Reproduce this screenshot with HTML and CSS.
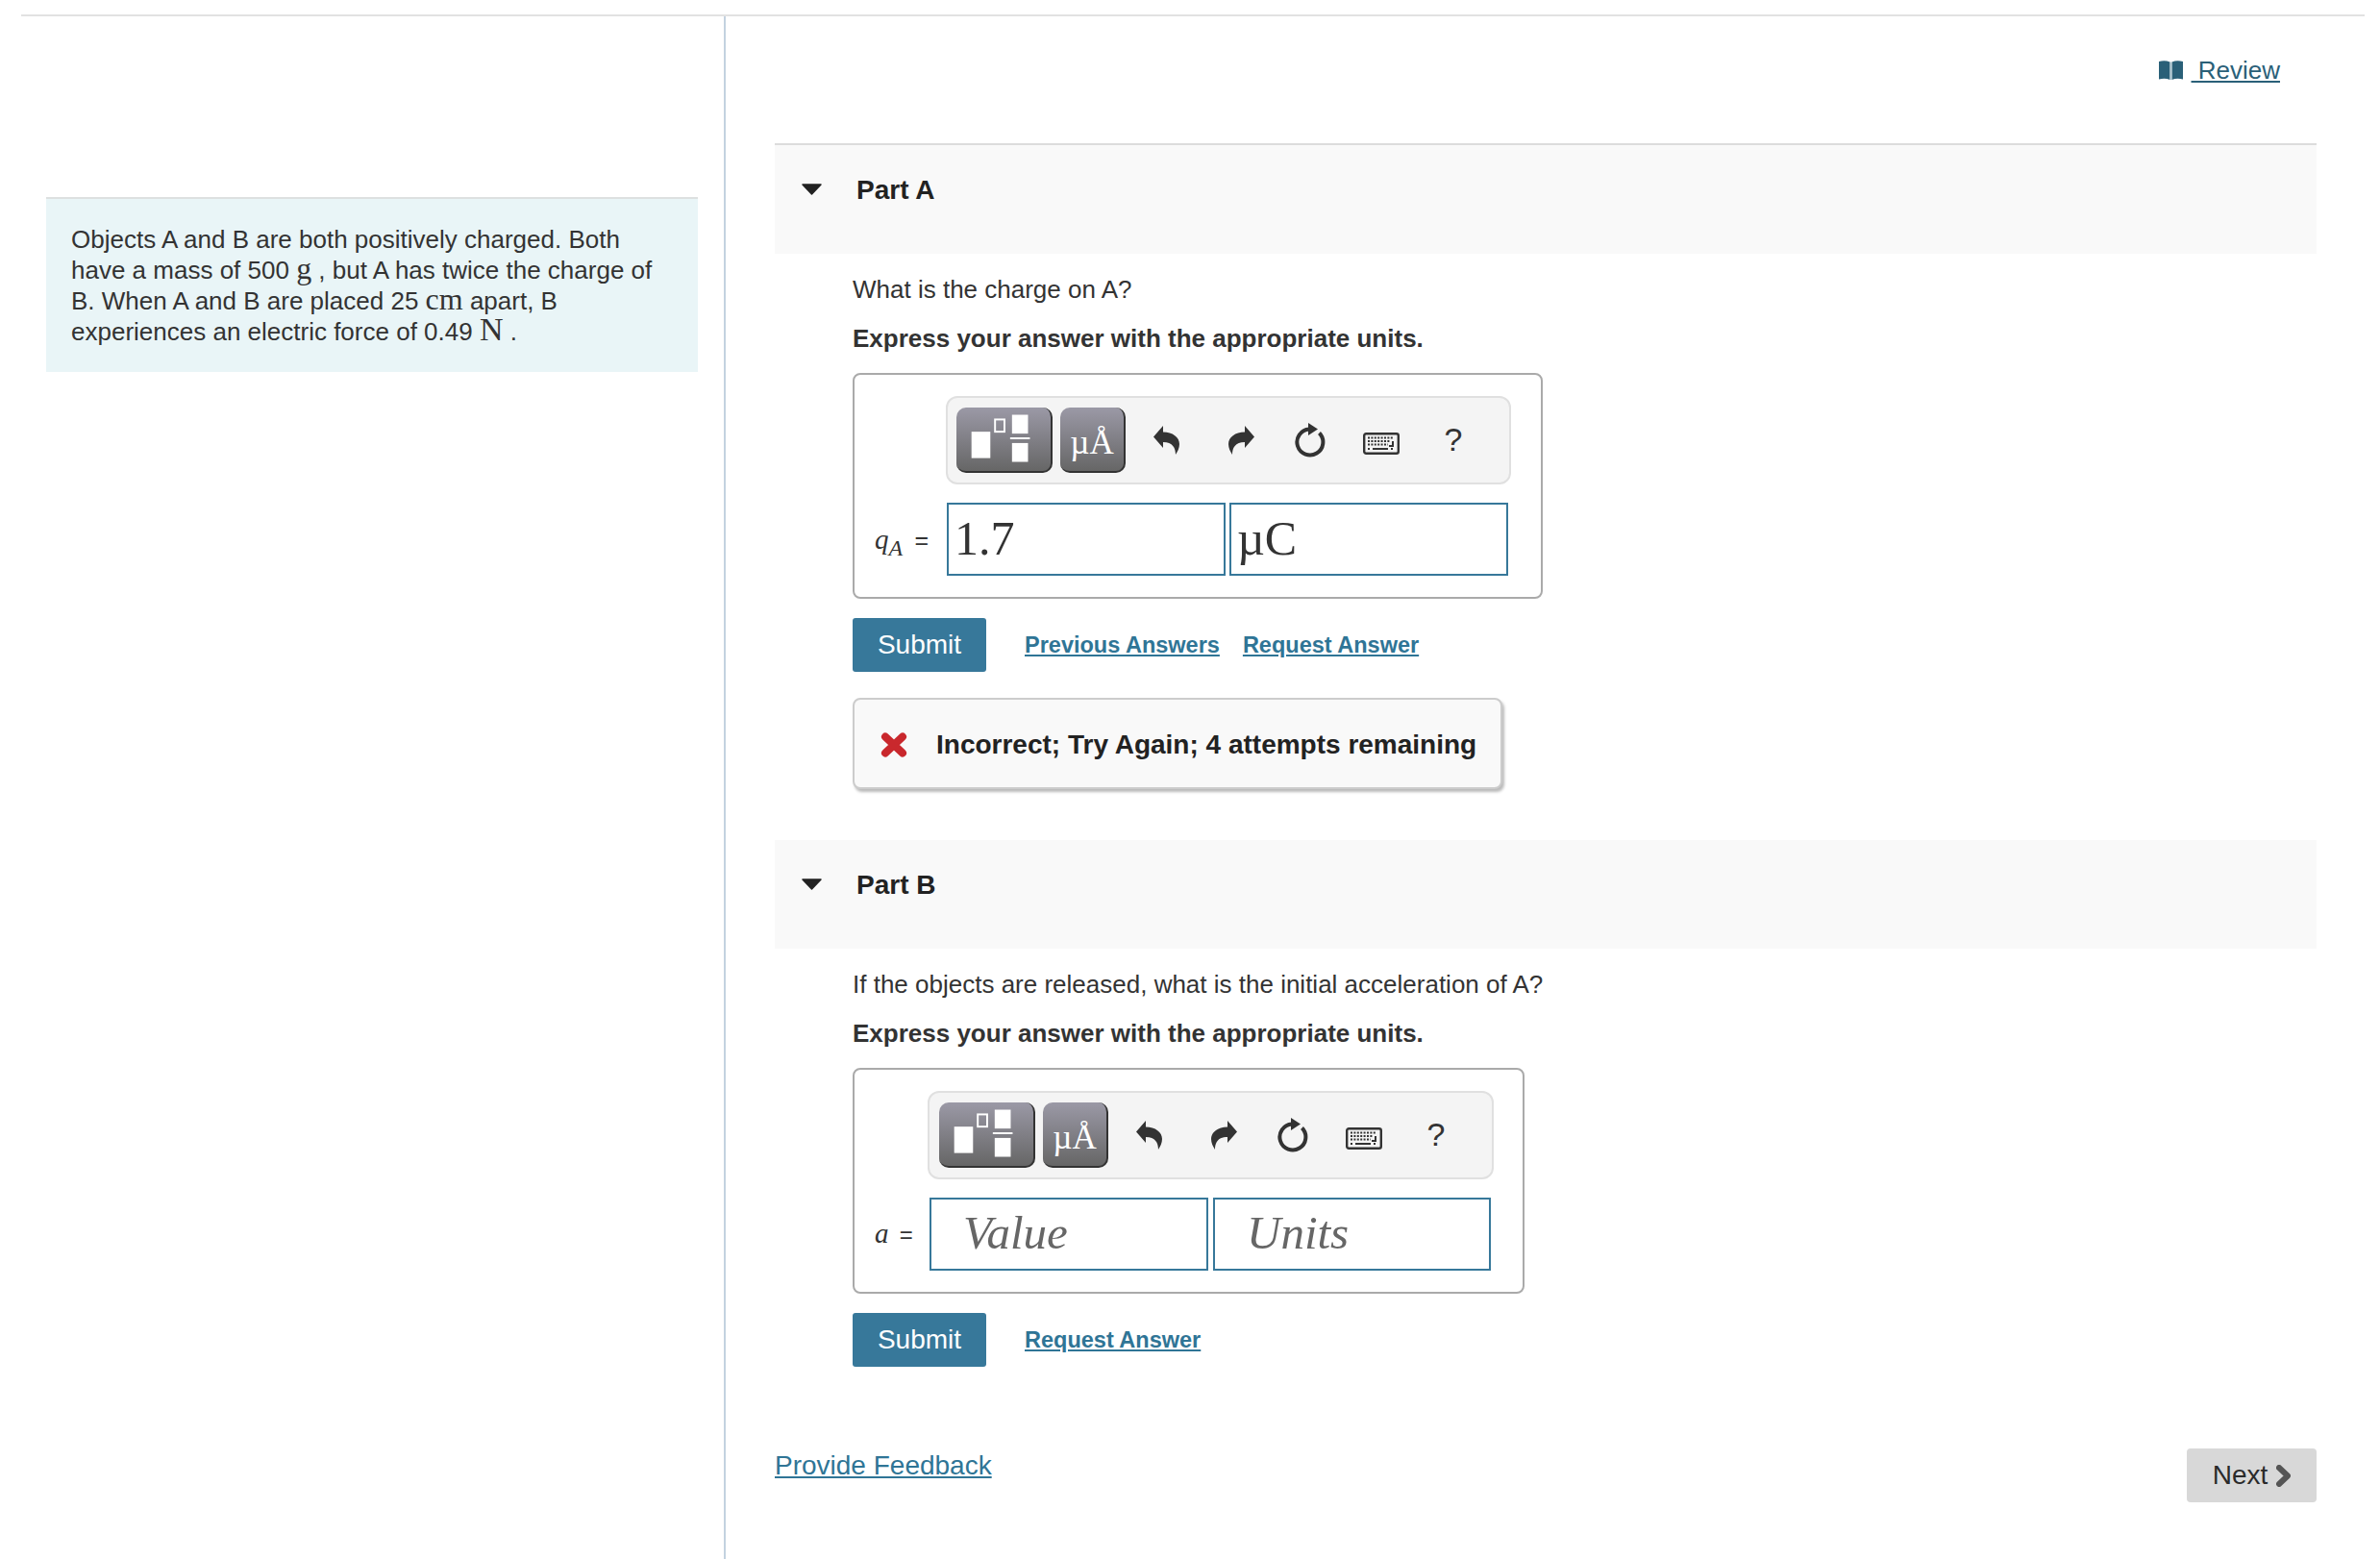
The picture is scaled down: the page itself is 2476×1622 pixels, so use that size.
FILE: index.html
```html
<!DOCTYPE html>
<html lang="en">
<head>
<meta charset="utf-8">
<title>Part A</title>
<link rel="stylesheet" href="styles.css">
</head>
<body>
<div class="page">
  <aside class="side">
    <div class="intro">Objects A and B are both positively charged. Both have a mass of 500 <span class="m">g</span> , but A has twice the charge of B. When A and B are placed 25 <span class="m">cm</span> apart, B experiences an electric force of 0.49 <span class="m m-lg">N</span> .</div>
  </aside>
  <main class="content">
    <div class="review">
      <svg class="book" width="25" height="21" viewBox="0 0 25 21"><path d="M0 1 C4 0 8 0 11.5 1.5 V20 C8 18.5 4 18.5 0 19.5 Z M13.5 1.5 C17 0 21 0 25 1 V19.5 C21 18.5 17 18.5 13.5 20 Z" fill="#2a6078"/><path d="M11.5 1.5 H13.5 V20 H11.5 Z" fill="#a9c2cd"/></svg>
      <a class="review-link" href="#">&nbsp;Review</a>
    </div>

    <section class="part part-a">
      <header class="part-head">
        <svg class="caret" width="21" height="12" viewBox="0 0 21 12"><path d="M1 1 H20 L10.5 11 Z" fill="#222" stroke="#222" stroke-width="1.5" stroke-linejoin="round"/></svg>
        <h2 class="part-title">Part A</h2>
      </header>
      <div class="part-body">
        <p class="q">What is the charge on A?</p>
        <p class="q q-bold">Express your answer with the appropriate units.</p>
        <div class="answer answer-a">
          <div class="spacer"></div>
          <div class="toolbar">
            <button class="tbtn tbtn-wide"><svg width="100" height="68" viewBox="0 0 100 68"><rect x="16" y="26" width="20" height="28" fill="#fff"/><rect x="41" y="13" width="10" height="13" fill="none" stroke="#fff" stroke-width="2"/><rect x="59" y="8" width="17" height="20" fill="#fff"/><rect x="57" y="32" width="21" height="2" fill="#fff"/><rect x="59" y="38" width="17" height="20" fill="#fff"/></svg></button>
            <button class="tbtn tbtn-unit">µÅ</button>
            <span class="ticon"><svg width="27" height="30" viewBox="0 0 27 30"><path d="M0 11.5 L10 0 V6.5 C20 6.5 27 12 27 19 C27 23 25 27 23 30 C23 23 20 17 10 17 V23 Z" fill="#333"/></svg></span>
            <span class="ticon ticon-redo"><svg width="27" height="30" viewBox="0 0 27 30"><path d="M27 11.5 L17 0 V6.5 C7 6.5 0 12 0 19 C0 23 2 27 4 30 C4 23 7 17 17 17 V23 Z" fill="#333"/></svg></span>
            <span class="ticon"><svg width="33" height="36" viewBox="0 0 33 36"><path d="M15 6.5 A13.5 13.5 0 1 0 25.5 10.5" fill="none" stroke="#333" stroke-width="4"/><path d="M14 0 L24 6.5 L14 13 Z" fill="#333"/></svg></span>
            <span class="ticon ticon-kb"><svg width="38" height="23" viewBox="0 0 38 23"><rect x="1.2" y="1.2" width="35.6" height="20.6" rx="2" fill="#f4f4f4" stroke="#333" stroke-width="2.4"/><path d="M5 5.5 H31 M5 9 H28 M5 12.5 H26 M5 17 H7 M29 17 H31" stroke="#333" stroke-width="2" stroke-dasharray="2 1.4"/><path d="M10 17 H26" stroke="#333" stroke-width="2"/><path d="M31 9 V14 H27" fill="none" stroke="#333" stroke-width="2"/></svg></span>
            <span class="ticon ticon-q">?</span>
          </div>
          <div class="var"><i>q</i><sub>A</sub> <span class="eq">=</span></div>
          <div class="inputs">
            <div class="field field-val">1.7</div>
            <div class="field field-val">µC</div>
          </div>
        </div>
        <div class="actions">
          <button class="submit">Submit</button>
          <a class="action-link" href="#">Previous Answers</a>
          <a class="action-link" href="#">Request Answer</a>
        </div>
        <div class="feedback">
          <svg class="xmark" width="28" height="26" viewBox="0 0 28 26"><path d="M5 4.5 L23 21.5 M23 4.5 L5 21.5" stroke="#c9282d" stroke-width="8" stroke-linecap="round"/></svg>
          <span>Incorrect; Try Again; 4 attempts remaining</span>
        </div>
      </div>
    </section>

    <section class="part part-b">
      <header class="part-head">
        <svg class="caret" width="21" height="12" viewBox="0 0 21 12"><path d="M1 1 H20 L10.5 11 Z" fill="#222" stroke="#222" stroke-width="1.5" stroke-linejoin="round"/></svg>
        <h2 class="part-title">Part B</h2>
      </header>
      <div class="part-body">
        <p class="q">If the objects are released, what is the initial acceleration of A?</p>
        <p class="q q-bold">Express your answer with the appropriate units.</p>
        <div class="answer answer-b">
          <div class="spacer"></div>
          <div class="toolbar">
            <button class="tbtn tbtn-wide"><svg width="100" height="68" viewBox="0 0 100 68"><rect x="16" y="26" width="20" height="28" fill="#fff"/><rect x="41" y="13" width="10" height="13" fill="none" stroke="#fff" stroke-width="2"/><rect x="59" y="8" width="17" height="20" fill="#fff"/><rect x="57" y="32" width="21" height="2" fill="#fff"/><rect x="59" y="38" width="17" height="20" fill="#fff"/></svg></button>
            <button class="tbtn tbtn-unit">µÅ</button>
            <span class="ticon"><svg width="27" height="30" viewBox="0 0 27 30"><path d="M0 11.5 L10 0 V6.5 C20 6.5 27 12 27 19 C27 23 25 27 23 30 C23 23 20 17 10 17 V23 Z" fill="#333"/></svg></span>
            <span class="ticon ticon-redo"><svg width="27" height="30" viewBox="0 0 27 30"><path d="M27 11.5 L17 0 V6.5 C7 6.5 0 12 0 19 C0 23 2 27 4 30 C4 23 7 17 17 17 V23 Z" fill="#333"/></svg></span>
            <span class="ticon"><svg width="33" height="36" viewBox="0 0 33 36"><path d="M15 6.5 A13.5 13.5 0 1 0 25.5 10.5" fill="none" stroke="#333" stroke-width="4"/><path d="M14 0 L24 6.5 L14 13 Z" fill="#333"/></svg></span>
            <span class="ticon ticon-kb"><svg width="38" height="23" viewBox="0 0 38 23"><rect x="1.2" y="1.2" width="35.6" height="20.6" rx="2" fill="#f4f4f4" stroke="#333" stroke-width="2.4"/><path d="M5 5.5 H31 M5 9 H28 M5 12.5 H26 M5 17 H7 M29 17 H31" stroke="#333" stroke-width="2" stroke-dasharray="2 1.4"/><path d="M10 17 H26" stroke="#333" stroke-width="2"/><path d="M31 9 V14 H27" fill="none" stroke="#333" stroke-width="2"/></svg></span>
            <span class="ticon ticon-q">?</span>
          </div>
          <div class="var"><i>a</i> <span class="eq eq-a">=</span></div>
          <div class="inputs">
            <div class="field field-ph">Value</div>
            <div class="field field-ph">Units</div>
          </div>
        </div>
        <div class="actions">
          <button class="submit">Submit</button>
          <a class="action-link" href="#">Request Answer</a>
        </div>
      </div>
    </section>

    <footer class="foot">
      <a class="foot-link" href="#">Provide Feedback</a>
      <button class="next">Next<svg width="15" height="23" viewBox="0 0 15 23"><path d="M3 3 L12 11.5 L3 20" fill="none" stroke="#555" stroke-width="6" stroke-linecap="round" stroke-linejoin="round"/></svg></button>
    </footer>
  </main>
</div>
</body>
</html>
```

FILE: styles.css
```css
* { box-sizing: border-box; }
html, body { margin: 0; padding: 0; background: #fff; }
body {
  font-family: "Liberation Sans", Arial, sans-serif;
  font-size: 26px;
  line-height: 32px;
  color: #333;
  padding-top: 15px;
  height: 1622px;
  overflow: hidden;
}
.page {
  display: flex;
  margin-left: 22px;
  width: 2438px;
  height: 1607px;
  border-top: 2px solid #e2e2e2;
}
.side {
  width: 733px;
  flex: none;
  border-right: 2px solid #c3d2e0;
  padding: 188px 27px 0 26px;
}
.intro {
  background: #e9f5f7;
  border-top: 2px solid #dde0e0;
  padding: 26px 30px 26px 26px;
}
.m { font-family: "Liberation Serif", serif; font-size: 32px; line-height: 0; }
.m-lg { font-size: 34px; }

.content { flex: 1; padding: 40px 50px 0 51px; }
.review {
  display: flex;
  justify-content: flex-end;
  align-items: center;
  gap: 9px;
  padding-right: 38px;
  height: 32px;
  margin-bottom: 60px;
}
.review-link { color: #2a6078; font-size: 26px; text-decoration: underline; }

.part-head {
  display: flex;
  align-items: center;
  background: #f9f9f9;
  padding: 31px 0 50px 28px;
  gap: 36px;
}
.part-a .part-head { border-top: 2px solid #dcdcdc; }
.part-b { margin-top: 53px; }
.caret { margin-top: -2px; flex: none; }
.part-title { margin: 0; font-size: 28px; line-height: 32px; font-weight: 700; color: #222; }
.part-body { padding-left: 81px; }
.q { margin: 21px 0 0; }
.q-bold { margin: 19px 0 0; font-weight: 700; }

.answer {
  display: grid;
  margin-top: 20px;
  border: 2px solid #aaa;
  border-radius: 8px;
  padding: 22px 0 22px 21px;
  row-gap: 19px;
  align-items: center;
  height: 235px;
}
.answer-a { width: 718px; grid-template-columns: 74px 588px; }
.answer-b { width: 699px; grid-template-columns: 55px 589px; }
.toolbar {
  display: flex;
  align-items: center;
  height: 92px;
  background: #f4f4f4;
  border: 2px solid #e0e0e0;
  border-radius: 12px;
  padding-left: 9px;
}
.answer-b .toolbar { padding-left: 10px; }
.tbtn {
  height: 68px;
  padding: 0;
  margin: 0;
  border: none;
  border-right: 2px solid #333;
  border-bottom: 2px solid #333;
  border-radius: 10px;
  background: linear-gradient(#9b99a6, #666);
  color: #fff;
  display: flex;
  align-items: center;
  justify-content: center;
  flex: none;
}
.tbtn-wide { width: 100px; margin-right: 8px; }
.tbtn-unit {
  width: 68px;
  margin-right: 5px;
  font-family: "Liberation Serif", serif;
  font-size: 35px;
  padding-top: 8px;
}
.ticon {
  width: 75px;
  flex: none;
  display: flex;
  align-items: center;
  justify-content: center;
}
.ticon-redo svg { margin-left: 6px; }
.ticon-kb svg { margin: 6px 4px 0 0; }
.ticon-q { font-size: 34px; color: #333; padding: 0 3px 2px 0; }
.var {
  font-family: "Liberation Serif", serif;
  font-size: 29px;
  color: #333;
  white-space: nowrap;
}
.var sub { font-size: 24px; font-style: italic; line-height: 0; }
.eq { font-family: "Liberation Sans", sans-serif; font-size: 25px; margin-left: 5px; }
.eq-a { margin-left: 4px; font-size: 24px; }
.inputs { display: flex; gap: 4px; margin-left: 1px; }
.answer-b .inputs { margin-left: 2px; gap: 5px; }
.answer-b .field:last-child { width: 289px; }
.field {
  width: 290px;
  height: 76px;
  border: 2px solid #37789a;
  font-family: "Liberation Serif", serif;
  font-size: 50px;
  line-height: 70px;
}
.field-val { padding-left: 6px; color: #333; }
.field-ph { padding-left: 33px; color: #666; font-style: italic; font-size: 49px; }

.actions { display: flex; align-items: center; margin-top: 20px; gap: 24px; }
.submit {
  width: 139px;
  height: 56px;
  margin-right: 16px;
  background: #37789a;
  color: #fff;
  border: none;
  border-radius: 3px;
  font-family: inherit;
  font-size: 28px;
  padding: 0;
}
.action-link { font-size: 23.5px; font-weight: 700; color: #2f7596; text-decoration: underline; }

.feedback {
  display: flex;
  align-items: center;
  gap: 30px;
  width: 676px;
  height: 95px;
  margin-top: 27px;
  padding: 3px 0 0 27px;
  background: #f9f9f9;
  border: 2px solid #ccc;
  border-radius: 8px;
  box-shadow: 2px 3px 3px #bbb;
  font-size: 28px;
  font-weight: 700;
  color: #222;
}

.foot {
  display: flex;
  justify-content: space-between;
  align-items: center;
  margin-top: 85px;
}
.foot-link { font-size: 28px; color: #2f7596; text-decoration: underline; margin-bottom: 20px; }
.next {
  display: flex;
  align-items: center;
  justify-content: center;
  gap: 9px;
  width: 135px;
  height: 56px;
  background: #d8d8d8;
  border: none;
  border-radius: 4px;
  font-family: inherit;
  font-size: 28px;
  color: #2a2a2a;
  padding: 0;
}
```
